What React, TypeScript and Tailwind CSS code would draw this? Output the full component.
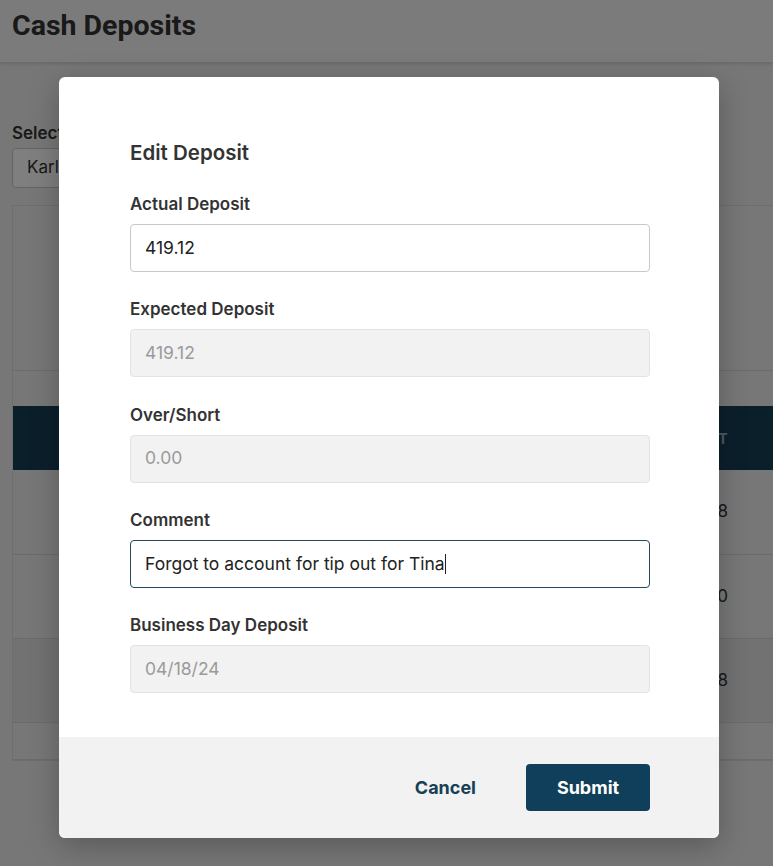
import React from 'react';

interface Field {
    label: string;
    value: string;
    kind: 'edit' | 'disabled' | 'focused';
}

const FIELDS: Field[] = [
    { label: 'Actual Deposit', value: '419.12', kind: 'edit' },
    { label: 'Expected Deposit', value: '419.12', kind: 'disabled' },
    { label: 'Over/Short', value: '0.00', kind: 'disabled' },
    { label: 'Comment', value: 'Forgot to account for tip out for Tina', kind: 'focused' },
    { label: 'Business Day Deposit', value: '04/18/24', kind: 'disabled' },
];

const ROWS = [
    { value: '$419.18', tone: 'bg-[#eeeeee]', h: 'h-[85px]' },
    { value: '$212.50', tone: 'bg-[#eeeeee]', h: 'h-[84px]' },
    { value: '$377.08', tone: 'bg-[#e5e5e5]', h: 'h-[84px]' },
    { value: '', tone: 'bg-[#eeeeee]', h: 'h-[37px]' },
];

function FieldBox({ field }: { field: Field }) {
    const base = 'flex items-center h-[48px] rounded-[4px] pl-[14px] text-[17.5px] border';
    if (field.kind === 'disabled') {
        return <div className={`${base} bg-[#f2f2f2] border-[#e3e3e3] text-[#9a9a9a]`}>{field.value}</div>;
    }
    if (field.kind === 'focused') {
        return (
            <div className={`${base} bg-white border-[#24485c] text-[#222]`}>
                {field.value}
                <span className="inline-block w-px h-[20px] bg-[#222]" />
            </div>
        );
    }
    return <div className={`${base} bg-white border-[#c8c8c8] text-[#222]`}>{field.value}</div>;
}

export default function App() {
    return (
        <div className="relative w-[773px] h-[866px] overflow-hidden bg-[#eeeeee] font-[Inter,sans-serif]">
            {/* ── underlying page ─────────────────────────────────── */}
            <header className="h-[62px] bg-[#f6f6f6] flex items-start pt-[9px] px-[12px] shadow-[0_2px_3px_rgba(0,0,0,0.12)]">
                <h1 className="text-[28.5px] font-bold text-[#333] leading-[34px] font-[Roboto,sans-serif]">Cash Deposits</h1>
            </header>

            <div className="pl-[12px] pt-[61px]">
                <p className="text-[17px] font-semibold text-[#333] leading-[20px] mb-[5px]">Select Employee</p>
                <div className="w-[260px] h-[40px] rounded-[4px] border border-[#c8c8c8] bg-white flex items-center pl-[14px] text-[17px] text-[#333]">
                    Karl Jensen
                </div>

                <div className="mt-[17px] w-[820px] border border-[#dcdcdc] bg-[#eeeeee]">
                    <div className="h-[165px] border-b border-[#d8d8d8]" />
                    <div className="h-[35px]" />
                    <div className="h-[64px] bg-[#163f57] flex items-center">
                        <span className="w-[715px] text-right text-[14px] font-bold tracking-wide text-[#9fb3bf]">AMOUNT</span>
                    </div>
                    {ROWS.map((r, i) => (
                        <div key={i} className={`${r.h} ${r.tone} border-b border-[#d6d6d6] flex items-center`}>
                            <span className="w-[715px] text-right text-[17px] text-[#333]">{r.value}</span>
                        </div>
                    ))}
                </div>
            </div>

            {/* ── backdrop ────────────────────────────────────────── */}
            <div className="absolute inset-0 bg-black/50" />

            {/* ── modal ───────────────────────────────────────────── */}
            <div className="absolute left-[59px] top-[77px] w-[660px] rounded-[6px] bg-white overflow-hidden shadow-[0_8px_30px_rgba(0,0,0,0.25)]">
                <div className="pl-[71px] pr-[69px] pt-[62px] pb-[44px]">
                    <h2 className="text-[20.5px] font-semibold text-[#333] leading-[28px] mb-[27px]">Edit Deposit</h2>
                    <div className="flex flex-col gap-[27.25px]">
                        {FIELDS.map((f) => (
                            <div key={f.label}>
                                <p className="text-[17px] font-semibold text-[#333] leading-[20px] mb-[10px]">{f.label}</p>
                                <FieldBox field={f} />
                            </div>
                        ))}
                    </div>
                </div>

                <div className="bg-[#f2f2f2] h-[101px] flex items-center justify-end gap-[50px] pr-[69px]">
                    <button className="text-[18px] font-bold text-[#173f55]">Cancel</button>
                    <button className="w-[124px] h-[47px] rounded-[4px] bg-[#0f3f5a] text-white text-[18px] font-bold">
                        Submit
                    </button>
                </div>
            </div>
        </div>
    );
}
